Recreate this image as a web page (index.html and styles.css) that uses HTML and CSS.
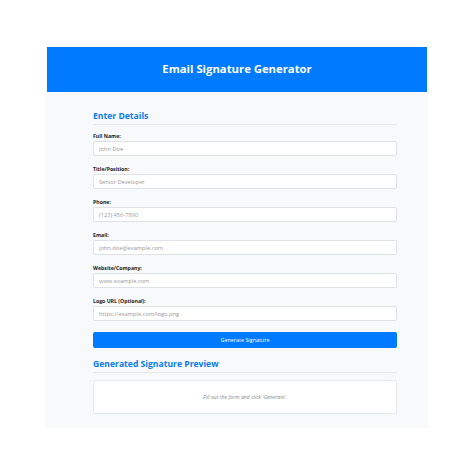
FILE: index.html
```html
<!DOCTYPE html>
<html lang="en">
<head>
<meta charset="utf-8">
<title>Email Signature Generator</title>
<link rel="stylesheet" href="styles.css">
</head>
<body>
<div class="container">
  <header class="header">
    <h1 class="title">Email Signature Generator</h1>
  </header>
  <main class="content">
    <h2 class="section-title">Enter Details</h2>
    <form class="form">
      <div class="field">
        <label class="label">Full Name:</label>
        <input class="input" type="text" placeholder="John Doe">
      </div>
      <div class="field">
        <label class="label">Title/Position:</label>
        <input class="input" type="text" placeholder="Senior Developer">
      </div>
      <div class="field">
        <label class="label">Phone:</label>
        <input class="input" type="text" placeholder="(123) 456-7890">
      </div>
      <div class="field">
        <label class="label">Email:</label>
        <input class="input" type="text" placeholder="john.doe@example.com">
      </div>
      <div class="field">
        <label class="label">Website/Company:</label>
        <input class="input" type="text" placeholder="www.example.com">
      </div>
      <div class="field">
        <label class="label">Logo URL (Optional):</label>
        <input class="input" type="text" placeholder="https://example.com/logo.png">
      </div>
      <button class="button" type="button">Generate Signature</button>
    </form>
    <h2 class="section-title preview-title">Generated Signature Preview</h2>
    <div class="preview">
      <p class="preview-text">Fill out the form and click 'Generate'.</p>
    </div>
  </main>
</div>
</body>
</html>
```

FILE: styles.css
```css
* { box-sizing: border-box; }

body {
  margin: 0;
  background: #ffffff;
  font-family: "Open Sans", "Noto Sans", sans-serif;
  color: #333333;
}

.container {
  width: 380px;
  margin: 47px auto 0;
  background: #f8f9fa;
  box-shadow: 0 0 3px rgba(0, 0, 0, 0.06);
}

.header {
  height: 45px;
  background: #007bff;
  display: flex;
  align-items: center;
  justify-content: center;
}

.title {
  margin: 0;
  color: #ffffff;
  font-size: 11.3px;
  font-weight: 700;
  line-height: 14px;
  padding-bottom: 1px;
}

.content {
  padding: 18px 30px 14px 46px;
}

.section-title {
  margin: 0 0 8px;
  padding-bottom: 2px;
  border-bottom: 1px solid #e6e8ea;
  color: #0a7cf0;
  font-size: 8.6px;
  font-weight: 700;
  line-height: 12px;
  width: 304px;
}

.form {
  display: flex;
  flex-direction: column;
  width: 304px;
}

.field {
  display: flex;
  flex-direction: column;
  margin-bottom: 10px;
}

.label {
  font-size: 5.2px;
  font-weight: 700;
  line-height: 7px;
  margin-bottom: 1px;
  color: #222222;
}

.input {
  height: 15px;
  padding: 0 5px;
  border: 1px solid #dfe2e5;
  border-radius: 2px;
  background: #ffffff;
  font-family: inherit;
  font-size: 5.7px;
  color: #333333;
  outline: none;
}

.input::placeholder {
  color: #9a9a9a;
}

.button {
  height: 16px;
  margin-top: 1px;
  border: none;
  border-radius: 2px;
  background: #007bff;
  color: #ffffff;
  font-family: inherit;
  font-size: 5.4px;
  padding: 0;
}

.preview-title {
  margin: 10px 0 7px;
}

.preview {
  height: 34px;
  width: 304px;
  background: #ffffff;
  border: 1px solid #e6e8ea;
  border-radius: 2px;
  display: flex;
  align-items: center;
  justify-content: center;
}

.preview-text {
  margin: 0;
  font-size: 5.2px;
  font-style: italic;
  color: #888888;
}
```
